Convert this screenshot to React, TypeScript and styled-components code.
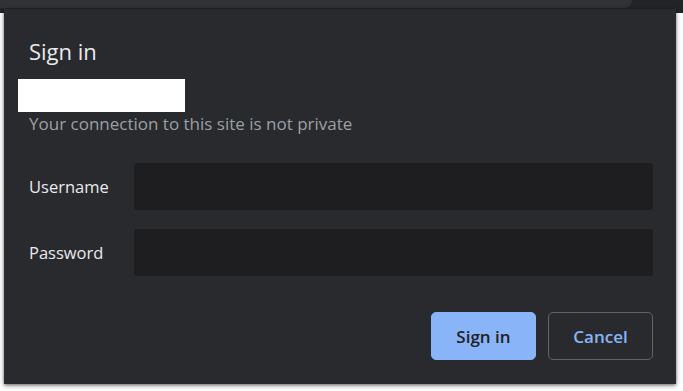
import React from "react";
import styled, { createGlobalStyle } from "styled-components";

const Global = createGlobalStyle`
  html, body { margin: 0; padding: 0; background: #ffffff; }
  body { width: 683px; height: 391px; overflow: hidden; font-family: "Open Sans", "Noto Sans", sans-serif; }
`;

const Page = styled.div`
  width: 683px;
  height: 391px;
  background: #ffffff;
  display: flex;
  flex-direction: column;
`;

const Toolbar = styled.div`
  height: 13px;
  flex: none;
  background: #222427;
`;

const Tab = styled.div`
  width: 632px;
  height: 8px;
  background: #303236;
  border-bottom-right-radius: 12px;
`;

const Dialog = styled.div`
  position: relative;
  margin: -4px 0 0 4px;
  width: 672px;
  height: 375px;
  box-sizing: border-box;
  background: #292a2d;
  box-shadow: 0 1px 3px rgba(0, 0, 0, 0.45), 0 2px 6px rgba(0, 0, 0, 0.25);
  padding: 0 23px 0 25px;
  display: flex;
  flex-direction: column;
`;

const Title = styled.h1`
  margin: 0;
  padding-top: 27px;
  font-size: 22px;
  line-height: 30px;
  font-weight: 400;
  color: #e8eaed;
`;

const Redacted = styled.div`
  margin: 13px 0 0 -11px;
  width: 167px;
  height: 33px;
  background: #ffffff;
`;

const Subtitle = styled.p`
  margin: 0;
  font-size: 17px;
  line-height: 24px;
  color: #9aa0a6;
`;

const Form = styled.div`
  margin-top: 27px;
  display: grid;
  grid-template-columns: 105px 1fr;
  row-gap: 19px;
  align-items: center;
`;

const Label = styled.label`
  font-size: 16.5px;
  color: #e8eaed;
`;

const Input = styled.div`
  height: 47px;
  background: #1e1e20;
  border-radius: 3px;
`;

const Actions = styled.div`
  margin-top: 36px;
  display: flex;
  justify-content: flex-end;
  gap: 12px;
`;

const Button = styled.button<{ $primary?: boolean }>`
  width: 105px;
  height: 48px;
  box-sizing: border-box;
  border-radius: 5px;
  font-family: inherit;
  font-size: 17px;
  font-weight: 600;
  cursor: pointer;
  background: ${(p) => (p.$primary ? "#8ab4f8" : "transparent")};
  color: ${(p) => (p.$primary ? "#202124" : "#8ab4f8")};
  border: 1px solid ${(p) => (p.$primary ? "#8ab4f8" : "#5f6368")};
`;

export default function App() {
  return (
    <Page>
      <Global />
      <Toolbar>
        <Tab />
      </Toolbar>
      <Dialog>
        <Title>Sign in</Title>
        <Redacted />
        <Subtitle>Your connection to this site is not private</Subtitle>
        <Form>
          <Label>Username</Label>
          <Input />
          <Label>Password</Label>
          <Input />
        </Form>
        <Actions>
          <Button $primary>Sign in</Button>
          <Button>Cancel</Button>
        </Actions>
      </Dialog>
    </Page>
  );
}
